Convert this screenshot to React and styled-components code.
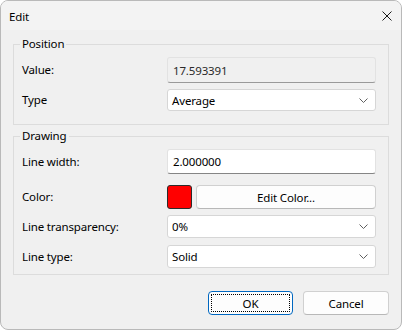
import React from 'react'
import styled, { createGlobalStyle } from 'styled-components'

const Global = createGlobalStyle`
  html, body { margin:0; padding:0; background:#fff; }
  body { font-family: 'Noto Sans', 'Open Sans', sans-serif; font-size:11.5px; letter-spacing:-0.15px; color:#000; }
  * { box-sizing:border-box; }
`

const Window = styled.div`
  width:402px; height:330px;
  border:1px solid #b9b9b9;
  border-radius:8px;
  background:#f0f0f0;
  overflow:hidden;
  display:flex;
  flex-direction:column;
`

const TitleBar = styled.div`
  height:29px;
  display:flex;
  align-items:center;
  justify-content:space-between;
  padding:0 9px 0 8px;
  background:#f3f3f3;
`

const TitleText = styled.div`
  margin-top:1px;
`

const CloseBtn = styled.div`
  width:10px; height:10px;
  display:flex;
  margin-top:1px;
`

const Body = styled.div`
  flex:1;
  padding:6px 12px 0 12px;
  display:flex;
  flex-direction:column;
`

const Group = styled.fieldset`
  margin:0 0 ${p => p.$mb || 0}px 0;
  padding:0 12px ${p => p.$pb}px 8px;
  border:1px solid #dcdcdc;
  min-inline-size:0;
`

const Legend = styled.legend`
  padding:0 2px;
  margin-left:-2px;
  line-height:16px;
`

const Row = styled.div`
  display:grid;
  grid-template-columns:145px 209px;
  align-items:center;
  height:${p => p.$h}px;
  margin-top:${p => p.$mt}px;
`

const Label = styled.div`
  line-height:16px;
`

const TextBox = styled.div`
  height:100%;
  background:${p => p.$readOnly ? '#f0f0f0' : '#fff'};
  border:1px solid #e2e2e2;
  border-bottom:1px solid ${p => p.$readOnly ? '#9a9a9a' : '#858585'};
  border-radius:3px;
  padding:0 5px;
  display:flex;
  align-items:center;
  color:${p => p.$readOnly ? '#2a2a2a' : '#000'};
`

const Combo = styled.div`
  height:100%;
  background:#fff;
  border:1px solid #d6d6d6;
  border-radius:3px;
  padding:0 7px 0 4px;
  display:flex;
  align-items:center;
  justify-content:space-between;
`

const ColorCell = styled.div`
  height:100%;
  display:flex;
  gap:4px;
`

const Swatch = styled.div`
  width:25px;
  height:24px;
  background:${p => p.$color};
  border:1px solid #2b2b2b;
  border-radius:3px;
`

const Button = styled.button`
  font-family:inherit;
  font-size:inherit;
  letter-spacing:inherit;
  color:#000;
  background:#fdfdfd;
  border:1px solid ${p => p.$default ? '#0067c0' : '#d0d0d0'};
  border-bottom-color:${p => p.$default ? '#0067c0' : '#b8b8b8'};
  border-radius:4px;
  height:${p => p.$h || 24}px;
  width:${p => p.$w ? p.$w + 'px' : 'auto'};
  flex:${p => p.$w ? 'none' : 1};
  padding:0;
  position:relative;
  ${p => p.$default && `
    &::after {
      content:'';
      position:absolute;
      inset:2px;
      border:1px dotted #000;
      border-radius:1px;
    }
  `}
`

const Footer = styled.div`
  display:flex;
  justify-content:flex-end;
  gap:10px;
  margin-top:16px;
`

function Chevron() {
  return (
    <svg width="9" height="5" viewBox="0 0 9 5">
      <polyline points="0.5,0.5 4.5,4.5 8.5,0.5" fill="none" stroke="#606060" strokeWidth="1" />
    </svg>
  )
}

function App() {
  return (
    <>
      <Global />
      <Window>
        <TitleBar>
          <TitleText>Edit</TitleText>
          <CloseBtn>
            <svg width="10" height="10" viewBox="0 0 10 10">
              <path d="M0.5 0.5 L9.5 9.5 M9.5 0.5 L0.5 9.5" stroke="#1a1a1a" strokeWidth="1" />
            </svg>
          </CloseBtn>
        </TitleBar>
        <Body>
          <Group $pb={13} $mb={3}>
            <Legend>Position</Legend>
            <Row $h={26} $mt={5}>
              <Label>Value:</Label>
              <TextBox $readOnly>17.593391</TextBox>
            </Row>
            <Row $h={22} $mt={6}>
              <Label>Type</Label>
              <Combo>Average<Chevron /></Combo>
            </Row>
          </Group>

          <Group $pb={6}>
            <Legend>Drawing</Legend>
            <Row $h={25} $mt={5}>
              <Label>Line width:</Label>
              <TextBox>2.000000</TextBox>
            </Row>
            <Row $h={24} $mt={11}>
              <Label>Color:</Label>
              <ColorCell>
                <Swatch $color="#ff0000" />
                <Button>Edit Color...</Button>
              </ColorCell>
            </Row>
            <Row $h={23} $mt={6}>
              <Label>Line transparency:</Label>
              <Combo>0%<Chevron /></Combo>
            </Row>
            <Row $h={23} $mt={7}>
              <Label>Line type:</Label>
              <Combo>Solid<Chevron /></Combo>
            </Row>
          </Group>

          <Footer>
            <Button $default $w={85}>OK</Button>
            <Button $w={86}>Cancel</Button>
          </Footer>
        </Body>
      </Window>
    </>
  )
}

export default App
